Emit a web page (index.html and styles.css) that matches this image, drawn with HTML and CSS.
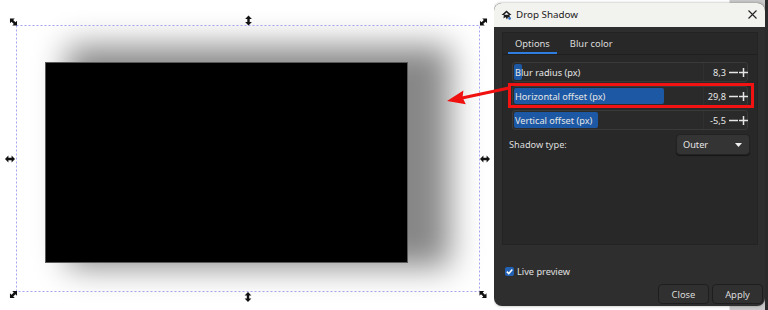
FILE: index.html
```html
<!DOCTYPE html>
<html>
<head>
<meta charset="utf-8">
<link rel="stylesheet" href="styles.css">
</head>
<body>
<div class="canvas">
  <div class="shape"></div>
  <svg class="guides" width="494" height="310" viewBox="0 0 494 310">
    <defs>
      <path id="dbl" d="M-5,0 L-1.6,-3.4 L-1.6,-1.2 L1.6,-1.2 L1.6,-3.4 L5,0 L1.6,3.4 L1.6,1.2 L-1.6,1.2 L-1.6,3.4 Z"/>
    </defs>
    <rect x="16.5" y="25.5" width="463" height="266" fill="none" stroke="#a4a4f0" stroke-width="1" stroke-dasharray="2 2"/>
    <g fill="#111">
      <use href="#dbl" transform="translate(13.5,22) rotate(45)"/>
      <use href="#dbl" transform="translate(248.5,20.5) rotate(90)"/>
      <use href="#dbl" transform="translate(483.5,22) rotate(-45)"/>
      <use href="#dbl" transform="translate(10,159)"/>
      <use href="#dbl" transform="translate(485,159)"/>
      <use href="#dbl" transform="translate(13.5,294.5) rotate(-45)"/>
      <use href="#dbl" transform="translate(248,297) rotate(90)"/>
      <use href="#dbl" transform="translate(483,294.5) rotate(45)"/>
    </g>
  </svg>
</div>
<div class="dwrap">
  <div class="dialog">
    <div class="titlebar">
      <svg class="appicon" width="11" height="10" viewBox="0 0 11 10">
        <path d="M5.5,0.5 L10.5,5 L8.5,5 L9,8.5 L7,7 L6,9.5 L4.5,7 L2.5,8.5 L2.8,5 L0.5,5 Z" fill="#1c1c1c"/>
        <path d="M3.2,4.8 L5.5,2.6 L7.8,4.8 Z" fill="#ffffff"/>
        <circle cx="8.6" cy="8.4" r="1.3" fill="#2a6fc9"/>
      </svg>
      <span class="title">Drop Shadow</span>
      <svg class="close" width="9" height="9" viewBox="0 0 9 9">
        <path d="M0.5,0.5 L8.5,8.5 M8.5,0.5 L0.5,8.5" stroke="#222" stroke-width="1.1" fill="none"/>
      </svg>
    </div>
    <div class="dbody">
      <div class="panel">
        <div class="tabs">
          <div class="tab active">Options</div>
          <div class="tab">Blur color</div>
        </div>
        <div class="content">
          <div class="spin">
            <div class="track"><div class="fill" style="width:8px"></div><span class="label">Blur radius (px)</span></div>
            <span class="val">8,3</span>
            <span class="pm"><svg width="9" height="9" viewBox="0 0 9 9"><path d="M0,4.5 H9" stroke="#e6e6e6" stroke-width="1.5"/></svg></span>
            <span class="pm"><svg width="9" height="9" viewBox="0 0 9 9"><path d="M0,4.5 H9 M4.5,0 V9" stroke="#e6e6e6" stroke-width="1.5"/></svg></span>
          </div>
          <div class="spin hl">
            <div class="track"><div class="fill" style="width:150px"></div><span class="label">Horizontal offset (px)</span></div>
            <span class="val">29,8</span>
            <span class="pm"><svg width="9" height="9" viewBox="0 0 9 9"><path d="M0,4.5 H9" stroke="#e6e6e6" stroke-width="1.5"/></svg></span>
            <span class="pm"><svg width="9" height="9" viewBox="0 0 9 9"><path d="M0,4.5 H9 M4.5,0 V9" stroke="#e6e6e6" stroke-width="1.5"/></svg></span>
          </div>
          <div class="spin">
            <div class="track"><div class="fill" style="width:84px"></div><span class="label">Vertical offset (px)</span></div>
            <span class="val">-5,5</span>
            <span class="pm"><svg width="9" height="9" viewBox="0 0 9 9"><path d="M0,4.5 H9" stroke="#e6e6e6" stroke-width="1.5"/></svg></span>
            <span class="pm"><svg width="9" height="9" viewBox="0 0 9 9"><path d="M0,4.5 H9 M4.5,0 V9" stroke="#e6e6e6" stroke-width="1.5"/></svg></span>
          </div>
          <div class="field">
            <span class="flabel">Shadow type:</span>
            <div class="combo"><span>Outer</span><svg width="7" height="4" viewBox="0 0 7 4"><path d="M0,0 H7 L3.5,4 Z" fill="#f0f0f0"/></svg></div>
          </div>
        </div>
      </div>
      <div class="check">
        <span class="box"><svg width="9" height="9" viewBox="0 0 9 9"><path d="M1.8,4.6 L3.8,6.6 L7.3,2.5" stroke="#fff" stroke-width="1.5" fill="none"/></svg></span>
        <span>Live preview</span>
      </div>
      <div class="actions">
        <button class="btnd">Close</button>
        <button class="btnd">Apply</button>
      </div>
    </div>
  </div>
</div>
<div class="strip"></div>
<svg class="callout" width="768" height="310" viewBox="0 0 768 310">
  <path d="M509,88 L462,98" stroke="#f01010" stroke-width="3" fill="none"/>
  <path d="M447,101 L465.8,104.2 L462.5,97.6 L463.4,90.4 Z" fill="#f01010"/>
</svg>
</body>
</html>
```

FILE: styles.css
```css
* { box-sizing: border-box; }
html, body { margin: 0; padding: 0; }
body {
  width: 768px;
  height: 310px;
  overflow: hidden;
  display: flex;
  position: relative;
  background: #ffffff;
  font-family: "Noto Sans", "Open Sans", sans-serif;
}
.canvas {
  width: 494px;
  height: 310px;
  position: relative;
  background: #ffffff;
  flex: none;
}
.shape {
  position: absolute;
  left: 45px;
  top: 62px;
  width: 363px;
  height: 201px;
  background: #000;
  border: 1px solid #5a5a5a;
  box-shadow: 32px -6px 30px 10px rgba(0, 0, 0, 0.47);
}
.guides {
  position: absolute;
  left: 0;
  top: 0;
}
.dwrap {
  width: 271px;
  flex: none;
  padding-top: 3px;
  background: linear-gradient(90deg, #ffffff 0, #ffffff 235px, #c9c9c9 236px, #c9c9c9 100%);
}
.dialog {
  width: 271px;
  height: 303px;
  border-radius: 8px;
  background: #2e2e2e;
  overflow: hidden;
  display: flex;
  flex-direction: column;
  box-shadow: 0 0 3px rgba(0, 0, 0, 0.35);
}
.titlebar {
  height: 24px;
  flex: none;
  background: #f2f2ef;
  display: flex;
  align-items: center;
  padding: 0 8px 0 7px;
}
.appicon { flex: none; margin-top: -1px; }
.title {
  margin-left: 4px;
  font-size: 9.8px;
  color: #1b1b1b;
  flex: 1;
  margin-top: -1px;
}
.close { flex: none; margin-top: -1px; }
.dbody {
  flex: 1;
  display: flex;
  flex-direction: column;
  padding: 5px 7px 0 8px;
}
.panel {
  height: 213px;
  background: #282828;
  border: 1px solid #232323;
  display: flex;
  flex-direction: column;
}
.tabs {
  height: 22px;
  flex: none;
  display: flex;
  gap: 6px;
  padding-left: 5px;
  border-bottom: 1px solid #1f1f1f;
}
.tab {
  padding: 0 7px;
  font-size: 9.4px;
  color: #dcdcdc;
  display: flex;
  align-items: center;
  border-bottom: 2px solid transparent;
  padding-top: 1px;
}
.tab.active { border-bottom-color: #2f7de0; }
.content {
  padding: 7px 9px 0 9px;
  display: flex;
  flex-direction: column;
  gap: 4px;
}
.spin {
  height: 20px;
  display: flex;
  align-items: stretch;
  border: 1px solid #3a3a3a;
  border-radius: 3px;
  background: #2a2a2a;
  position: relative;
}
.spin.hl::after {
  content: "";
  position: absolute;
  left: -5px;
  right: -7px;
  top: -4px;
  bottom: -3px;
  border: 3px solid #f21212;
}
.track {
  width: 189px;
  flex: none;
  position: relative;
  margin: 1px 0 1px 1px;
  display: flex;
  align-items: center;
}
.fill {
  position: absolute;
  left: 0;
  top: 0;
  bottom: 0;
  background: #1d58a4;
  border-radius: 2px;
}
.label {
  position: relative;
  padding-left: 1px;
  font-size: 9.2px;
  color: #e6e6e6;
  white-space: nowrap;
}
.val {
  width: 25px;
  flex: none;
  font-size: 9.2px;
  color: #e6e6e6;
  text-align: right;
  padding-right: 2px;
  display: flex;
  align-items: center;
  justify-content: flex-end;
  border-left: 1px solid #303030;
}
.pm {
  width: 10.5px;
  flex: none;
  display: flex;
  align-items: center;
  justify-content: center;
}
.field {
  margin-top: 0;
  margin-left: -3px;
  margin-right: -2px;
  height: 21px;
  display: flex;
  align-items: center;
  justify-content: space-between;
}
.flabel {
  font-size: 9.2px;
  color: #dedede;
}
.combo {
  width: 74px;
  height: 21px;
  background: #343434;
  border: 1px solid #232323;
  border-radius: 4px;
  box-shadow: 0 1px 1px rgba(0, 0, 0, 0.45);
  display: flex;
  align-items: center;
  justify-content: space-between;
  padding: 0 7px 0 6px;
  font-size: 9.2px;
  color: #e6e6e6;
}
.check {
  margin-top: 19px;
  margin-left: 3px;
  height: 14px;
  display: flex;
  align-items: center;
  gap: 3px;
  font-size: 9.2px;
  color: #e0e0e0;
}
.box {
  width: 9px;
  height: 9px;
  border-radius: 2px;
  background: #2261b3;
  display: flex;
}
.actions {
  margin-top: 6px;
  margin-right: -5px;
  display: flex;
  justify-content: flex-end;
  gap: 3px;
}
.btnd {
  width: 51px;
  height: 20px;
  background: #303030;
  border: 1px solid #1e1e1e;
  border-radius: 4px;
  color: #dadada;
  font-family: "Noto Sans", "Open Sans", sans-serif;
  font-size: 9.4px;
  padding: 0;
}
.strip {
  flex: 1;
  background: #2b2b2b;
}
.callout {
  position: absolute;
  left: 0;
  top: 0;
  pointer-events: none;
}
```
